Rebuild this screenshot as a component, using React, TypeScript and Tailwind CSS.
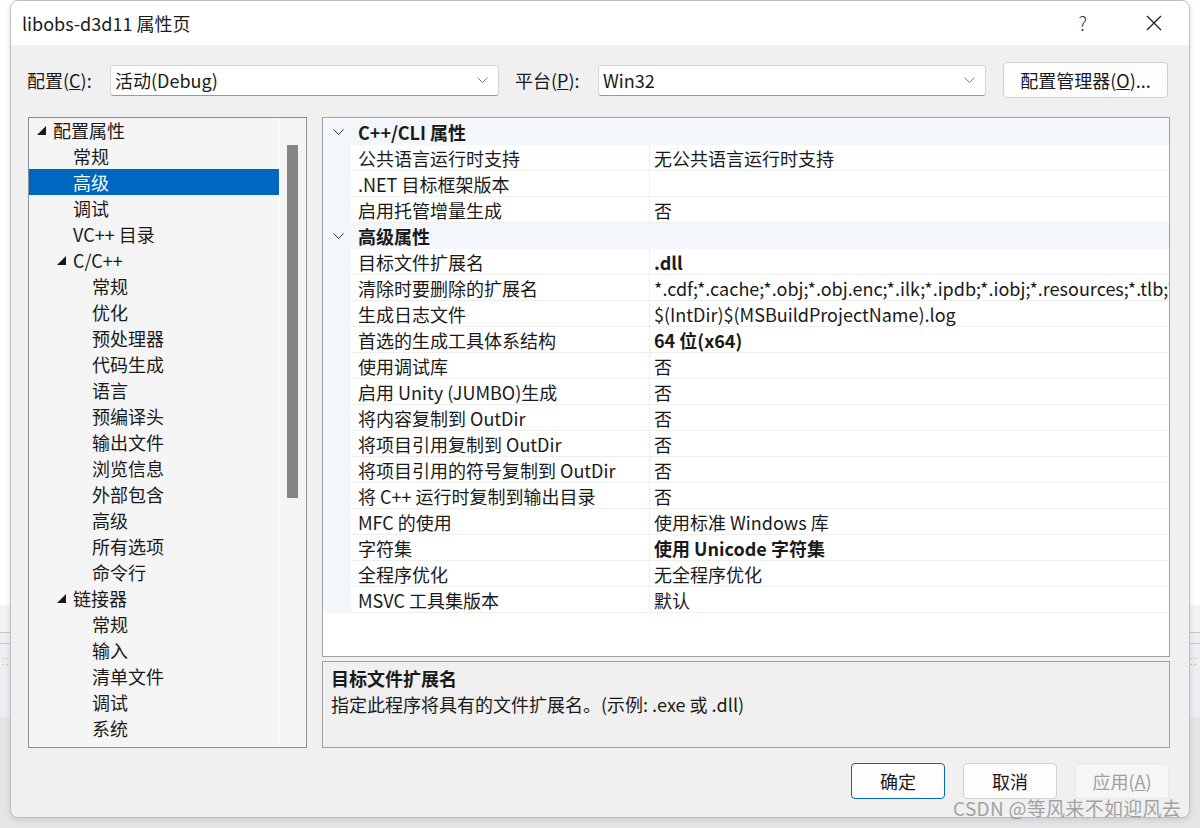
import React from "react";

type TreeItem = { label: string; level: number; expanded?: boolean; selected?: boolean };

const treeItems: TreeItem[] = [
  { label: "配置属性", level: 0, expanded: true },
  { label: "常规", level: 1 },
  { label: "高级", level: 1, selected: true },
  { label: "调试", level: 1 },
  { label: "VC++ 目录", level: 1 },
  { label: "C/C++", level: 1, expanded: true },
  { label: "常规", level: 2 },
  { label: "优化", level: 2 },
  { label: "预处理器", level: 2 },
  { label: "代码生成", level: 2 },
  { label: "语言", level: 2 },
  { label: "预编译头", level: 2 },
  { label: "输出文件", level: 2 },
  { label: "浏览信息", level: 2 },
  { label: "外部包含", level: 2 },
  { label: "高级", level: 2 },
  { label: "所有选项", level: 2 },
  { label: "命令行", level: 2 },
  { label: "链接器", level: 1, expanded: true },
  { label: "常规", level: 2 },
  { label: "输入", level: 2 },
  { label: "清单文件", level: 2 },
  { label: "调试", level: 2 },
  { label: "系统", level: 2 },
];

type PropRow =
  | { kind: "header"; title: string }
  | { kind: "row"; name: string; value: string; bold?: boolean };

const rows: PropRow[] = [
  { kind: "header", title: "C++/CLI 属性" },
  { kind: "row", name: "公共语言运行时支持", value: "无公共语言运行时支持" },
  { kind: "row", name: ".NET 目标框架版本", value: "" },
  { kind: "row", name: "启用托管增量生成", value: "否" },
  { kind: "header", title: "高级属性" },
  { kind: "row", name: "目标文件扩展名", value: ".dll", bold: true },
  {
    kind: "row",
    name: "清除时要删除的扩展名",
    value: "*.cdf;*.cache;*.obj;*.obj.enc;*.ilk;*.ipdb;*.iobj;*.resources;*.tlb;*.tli;*.tlh;*.tmp;*.rsp",
  },
  { kind: "row", name: "生成日志文件", value: "$(IntDir)$(MSBuildProjectName).log" },
  { kind: "row", name: "首选的生成工具体系结构", value: "64 位(x64)", bold: true },
  { kind: "row", name: "使用调试库", value: "否" },
  { kind: "row", name: "启用 Unity (JUMBO)生成", value: "否" },
  { kind: "row", name: "将内容复制到 OutDir", value: "否" },
  { kind: "row", name: "将项目引用复制到 OutDir", value: "否" },
  { kind: "row", name: "将项目引用的符号复制到 OutDir", value: "否" },
  { kind: "row", name: "将 C++ 运行时复制到输出目录", value: "否" },
  { kind: "row", name: "MFC 的使用", value: "使用标准 Windows 库" },
  { kind: "row", name: "字符集", value: "使用 Unicode 字符集", bold: true },
  { kind: "row", name: "全程序优化", value: "无全程序优化" },
  { kind: "row", name: "MSVC 工具集版本", value: "默认" },
];

function Chevron({ className }: { className?: string }) {
  return (
    <svg width="11" height="6" viewBox="0 0 11 6" className={className}>
      <polyline points="0.5,0.5 5.5,5.5 10.5,0.5" fill="none" stroke="currentColor" strokeWidth="1" />
    </svg>
  );
}

function Triangle() {
  return (
    <svg width="9" height="9" viewBox="0 0 9 9">
      <polygon points="9,0 9,9 0,9" fill="#1a1a1a" />
    </svg>
  );
}

function ComboBox({ value, width }: { value: string; width: string }) {
  return (
    <div
      className={`${width} flex h-[31px] items-center justify-between rounded-[3px] border border-[#d5d5d5] border-b-[#9a9a9a] bg-white pl-[4px] pr-[10px]`}
    >
      <span>{value}</span>
      <Chevron className="text-[#7a7a7a]" />
    </div>
  );
}

function TreeRow({ item }: { item: TreeItem }) {
  const pad = item.level === 0 ? "pl-[8px]" : item.level === 1 ? "pl-[28px]" : "pl-[47px]";
  return (
    <div
      className={`flex h-[26px] items-center ${pad} ${
        item.selected ? "bg-[#0067c0] text-white" : "text-[#1a1a1a]"
      }`}
    >
      <span className="flex w-[16px] items-center">{item.expanded && <Triangle />}</span>
      <span className="whitespace-nowrap">{item.label}</span>
    </div>
  );
}

function PropGridRow({ row }: { row: PropRow }) {
  if (row.kind === "header") {
    return (
      <div className="flex h-[26px] items-center bg-[#f3f6fb]">
        <div className="flex w-[28px] justify-center pl-[3px] text-[#333]">
          <Chevron />
        </div>
        <div className="pl-[7px] font-bold">{row.title}</div>
      </div>
    );
  }
  return (
    <div className="flex h-[26px]">
      <div className="w-[28px] shrink-0 bg-[#f3f6fb]" />
      <div className="flex w-[299px] shrink-0 items-center border-r border-b border-[#efefef] pl-[7px] whitespace-nowrap">
        {row.name}
      </div>
      <div
        className={`flex min-w-0 flex-1 items-center overflow-hidden border-b border-[#efefef] pl-[4px] whitespace-nowrap ${
          row.bold ? "font-bold" : ""
        }`}
      >
        {row.value}
      </div>
    </div>
  );
}

function DialogButton({
  children,
  primary,
  disabled,
}: {
  children: React.ReactNode;
  primary?: boolean;
  disabled?: boolean;
}) {
  const tone = primary
    ? "border-[#0067c0] bg-[#fdfdfd] text-[#1a1a1a]"
    : disabled
      ? "border-[#e8e8e8] bg-[#f6f6f6] text-[#a0a0a0]"
      : "border-[#d0d0d0] bg-[#fdfdfd] text-[#1a1a1a]";
  return (
    <div className={`flex h-[36px] w-[94px] items-center justify-center rounded-[4px] border ${tone}`}>
      {children}
    </div>
  );
}

export default function App() {
  return (
    <div className="relative h-[828px] w-[1200px] overflow-hidden bg-white font-['Noto_Sans_CJK_SC','Noto_Sans',sans-serif] text-[18px] leading-[26px] text-[#1a1a1a]">
      {/* desktop behind the dialog */}
      <div className="flex h-full flex-col">
        <div className="h-[605px] bg-white" />
        <div className="h-[27px] bg-[#f4f4f4]" />
        <div className="h-[1px] bg-[#c9c9d4]" />
        <div className="h-[10px] bg-[#eeeef3]" />
        <div className="h-[1px] bg-[#c9c9d4]" />
        <div className="flex h-[73px] justify-between bg-[#ededf2] px-[2px] pt-[14px] text-[8px] leading-[8px] tracking-[2px] text-[#9a9aa4]">
          <span>⁚⁚</span>
          <span>⁚⁚</span>
        </div>
        <div className="flex-1 bg-[#e6e6e8]" />
      </div>

      {/* dialog window */}
      <div className="absolute left-[10px] top-0 flex h-[818px] w-[1180px] flex-col overflow-hidden rounded-[8px] border border-[#bdbdbd] bg-[#f0f0f0] shadow-[0_2px_6px_rgba(0,0,0,0.12)]">
        {/* title bar */}
        <div className="flex h-[44px] shrink-0 items-center bg-white pl-[11px]">
          <span className="flex-1 text-[18px]">libobs-d3d11 属性页</span>
          <span className="mr-[59px] text-[19px] font-light text-[#333]">?</span>
          <svg width="16" height="16" viewBox="0 0 16 16" className="mr-[27px]">
            <path d="M1 1 L15 15 M15 1 L1 15" stroke="#1a1a1a" strokeWidth="1.2" />
          </svg>
        </div>

        <div className="flex flex-1 flex-col pl-[17px] pr-[19px]">
          {/* configuration row */}
          <div className="mt-[17px] flex h-[36px] items-center">
            <span className="w-[83px] shrink-0 -ml-[1px]">
              配置(<u>C</u>):
            </span>
            <ComboBox value="活动(Debug)" width="w-[389px]" />
            <span className="ml-[16px] w-[83px] shrink-0">
              平台(<u>P</u>):
            </span>
            <ComboBox value="Win32" width="w-[388px]" />
            <div className="ml-[17px] flex h-[36px] w-[165px] items-center justify-center rounded-[4px] border border-[#d0d0d0] bg-[#fdfdfd]">
              配置管理器(<u>O</u>)...
            </div>
          </div>

          {/* main area */}
          <div className="mt-[19px] flex h-[631px]">
            {/* tree */}
            <div className="flex w-[279px] shrink-0 border border-[#8b8d96] bg-[#f5f5f5]">
              <div className="flex-1 -mt-[1px]">
                {treeItems.map((item, i) => (
                  <TreeRow key={i} item={item} />
                ))}
              </div>
              <div className="w-[27px] shrink-0 border-l border-white pt-[27px]">
                <div className="ml-[7px] h-[353px] w-[11px] bg-[#858585]" />
              </div>
            </div>

            {/* right column */}
            <div className="ml-[15px] flex min-w-0 flex-1 flex-col">
              <div className="h-[540px] overflow-hidden border border-[#a0a0a0] bg-white pt-[1px]">
                {rows.map((row, i) => (
                  <PropGridRow key={i} row={row} />
                ))}
              </div>
              <div className="mt-[4px] h-[87px] border border-[#a0a0a0] bg-[#f0f0f0] pl-[8px] pt-[3px]">
                <div className="font-bold">目标文件扩展名</div>
                <div>指定此程序将具有的文件扩展名。(示例: .exe 或 .dll)</div>
              </div>
            </div>
          </div>

          {/* buttons */}
          <div className="mt-[15px] flex justify-end gap-[18px] pr-[1px]">
            <DialogButton primary>确定</DialogButton>
            <DialogButton>取消</DialogButton>
            <DialogButton disabled>
              应用(<u>A</u>)
            </DialogButton>
          </div>
        </div>
      </div>

      {/* watermark */}
      <div className="absolute left-[953px] top-[798px] text-[19px] leading-[20px] tracking-[0.3px] text-[#8c8c8c]/80">
        CSDN @等风来不如迎风去
      </div>
    </div>
  );
}
